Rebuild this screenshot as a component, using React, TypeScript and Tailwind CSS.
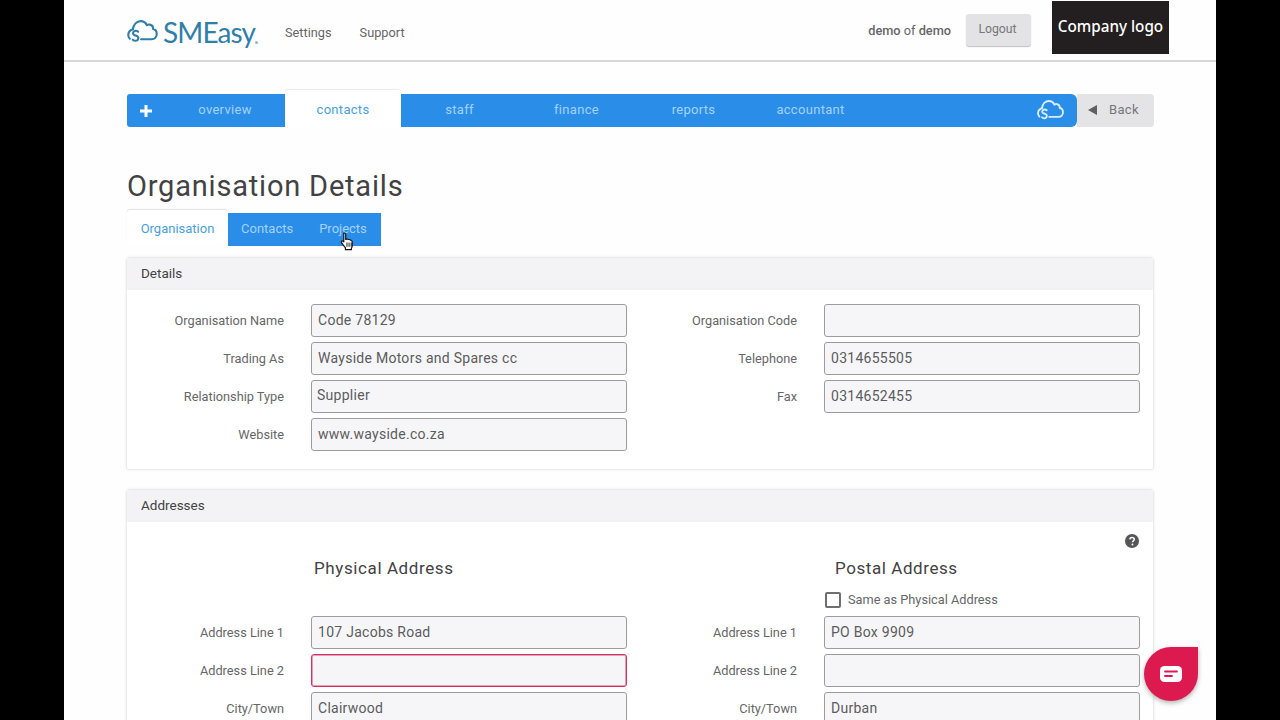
const font = { fontFamily: "Roboto, 'Liberation Sans', sans-serif" };

function CloudLogo({ className }: { className: string }) {
  return (
    <svg className={className} viewBox="0 0 32 26" fill="none" stroke="currentColor" strokeWidth={2.2} strokeLinecap="round" strokeLinejoin="round" aria-hidden="true">
      <path d="M6 9.500C3 10.500 1.200 12.600 1.200 15.600c0 1.600.6 2.900 1.600 3.900" />
      <path d="M6 9.500C6.600 4.600 10 1.200 14 1.200c3 0 5.400 1.700 6.600 4.200 1-.6 2-.8 3-.6 2.200.4 3.500 2.300 3.400 4.600 2.500.4 3.800 2.700 3.800 5.200 0 3.100-2.300 5.400-5.200 5.400H14.500" />
      <path d="M11.500 12.200C10.300 11.200 8.200 11 7 12c-1.300 1.100-1 3 .4 3.600l2.800 1.100c1.600.7 2 2.800.7 4-1.200 1.200-3.600 1.100-5-.2" />
    </svg>
  );
}

function Field({ label, value, error, select }: { label: string; value?: string; error?: boolean; select?: boolean }) {
  return (
    <div className="flex items-center h-[33px]">
      <label className="w-[157px] shrink-0 text-right text-[12.75px] text-[#666668]">{label}</label>
      <div
        className={`ml-[27px] w-[316px] h-[33px] shrink-0 rounded-[3px] bg-[#f6f6f8] border flex items-center text-[14px] tracking-[0.27px] text-[#5c5c5e] ${
          select ? "px-[5px] pb-[2px]" : "px-[6px]"
        } ${error ? "border-[#d5305e] shadow-[inset_0_0_0_1px_#e4a0b4]" : "border-[#9c9c9c]"}`}
      >
        {value}
      </div>
    </div>
  );
}

function Card({ title, children, className }: { title: string; children: React.ReactNode; className?: string }) {
  return (
    <section className={`rounded-[2px] bg-white shadow-[0_0_3px_rgba(0,0,0,0.22)] ${className ?? ""}`}>
      <div className="h-[32px] pb-[1px] bg-[#f3f3f5] pl-[14px] flex items-center text-[13.5px] text-[#424244]">{title}</div>
      {children}
    </section>
  );
}

const navItems = ["staff", "finance", "reports", "accountant"];

export default function App() {
  return (
    <div className="h-[720px] overflow-hidden bg-black flex justify-center" style={font}>
      <div className="relative w-[1152px] h-[720px] overflow-hidden bg-[#fefefe]">
        {/* top bar */}
        <header className="h-[62px] border-b-2 border-[#d8d8d8] pl-[63px] flex items-start">
          <div className="flex items-center h-[64px] text-[#2f7fa8]">
            <CloudLogo className="w-[31px] h-[25px]" />
            <span className="ml-[5px] text-[28px] tracking-[-0.9px]" style={{ fontFamily: "Lato, sans-serif" }}>SMEasy</span>
            <span className="self-end mb-[20px] w-[3px] h-[3px] rounded-full bg-[#8fb8cf]" />
          </div>
          <nav className="flex items-center h-[65px] ml-[27px] gap-[28px] text-[12.75px] text-[#666668]">
            <a>Settings</a>
            <a>Support</a>
          </nav>
          <div className="ml-auto flex items-start pr-[47px]">
            <div className="mt-[21px] text-[12.75px] text-[#666668]">
              <b className="font-medium">demo</b> of <b className="font-medium">demo</b>
            </div>
            <button className="mt-[14px] ml-[15px] w-[65px] h-[32px] pb-[1px] pr-[2px] rounded-[3px] bg-[#e3e3e5] text-[12.25px] text-[#77777a] shadow-[0_1px_1px_rgba(0,0,0,0.25)]">Logout</button>
            <div className="mt-[1px] ml-[21px] w-[117px] h-[53px] bg-[#231f20] text-white text-[15.25px] font-medium flex items-center justify-center pb-[2px]" style={{ fontFamily: "'Noto Sans', sans-serif" }}>Company logo</div>
          </div>
        </header>

        <main className="pl-[63px] pr-[63px]">
          {/* main nav */}
          <div className="mt-[32px] flex items-end h-[33px] text-[13px]">
            <div className="w-[950px] h-[33px] shrink-0 rounded-l-[3px] rounded-r-[6px] bg-[#2a8de8] flex items-center">
              <div className="w-[38px] flex justify-center text-white">
                <svg className="w-[12px] h-[12px]" viewBox="0 0 12 12" fill="currentColor" aria-hidden="true"><path d="M4.500 0h3v4.500H12v3H7.500V12h-3V7.500H0v-3h4.500z" /></svg>
              </div>
              <a className="w-[120px] text-center text-[#a4d2f7] tracking-[0.3px] pb-[2px]">overview</a>
              <div className="relative w-[116px] h-[37px] -mt-[4px] pt-[3px] rounded-t-[3px] bg-white flex items-center justify-center text-[#4a9fda] tracking-[0.3px] shadow-[0_-1px_1px_rgba(0,0,0,0.08)]">contacts</div>
              {navItems.map((n) => (
                <a key={n} className="w-[117px] text-center text-[#a4d2f7] tracking-[0.3px] pb-[2px]">{n}</a>
              ))}
              <CloudLogo className="ml-auto mr-[13px] w-[27px] h-[22px] text-[#d8eefc]" />
            </div>
            <button className="w-[77px] h-[33px] shrink-0 rounded-r-[4px] bg-[#e4e4e6] flex items-center text-[#77777a] tracking-[0.3px] pb-[1px]">
              <span className="ml-[11px] w-0 h-0 border-y-[5px] border-y-transparent border-r-[9px] border-r-[#5f5f61]" />
              <span className="ml-[12px]">Back</span>
            </button>
          </div>

          <h1 className="mt-[41px] text-[29px] leading-[36px] tracking-[0.8px] text-[#424244]">Organisation Details</h1>

          {/* sub tabs */}
          <div className="mt-[6px] flex items-end h-[36px] text-[13px]">
            <div className="w-[101px] h-[36px] pt-[2px] rounded-t-[3px] bg-white flex items-center justify-center text-[#4a9fda] shadow-[0_-1px_1px_rgba(0,0,0,0.12)]">Organisation</div>
            <div className="w-[153px] h-[33px] bg-[#2a8de8] flex items-center text-[#a4d2f7] pb-[2px]">
              <a className="ml-[13px]">Contacts</a>
              <a className="ml-[26px]">Projects</a>
            </div>
          </div>

          <Card title="Details" className="mt-[12px] h-[211px]">
            <div className="pt-[14px] grid grid-cols-[500px_1fr] gap-x-[13px]">
              <div className="flex flex-col gap-[5px]">
                <Field label="Organisation Name" value="Code 78129" />
                <Field label="Trading As" value="Wayside Motors and Spares cc" />
                <Field label="Relationship Type" value="Supplier" select />
                <Field label="Website" value="www.wayside.co.za" />
              </div>
              <div className="flex flex-col gap-[5px]">
                <Field label="Organisation Code" />
                <Field label="Telephone" value="0314655505" />
                <Field label="Fax" value="0314652455" />
              </div>
            </div>
          </Card>

          <Card title="Addresses" className="relative mt-[21px] h-[300px]">
            <svg className="absolute right-[14px] top-[44px] w-[14px] h-[14px] text-[#555557]" viewBox="0 0 16 16" aria-hidden="true">
              <circle cx="8" cy="8" r="8" fill="currentColor" />
              <path d="M5.500 6.200C5.600 4.800 6.700 4 8 4c1.400 0 2.600.8 2.600 2.200 0 1.700-2.100 1.800-2.100 3.300" fill="none" stroke="#fff" strokeWidth={1.7} />
              <circle cx="8.500" cy="12" r="1.100" fill="#fff" />
            </svg>
            <div className="pt-[34px] grid grid-cols-[500px_1fr] gap-x-[13px]">
              <div>
                <h2 className="ml-[187px] text-[17px] leading-[24px] tracking-[0.6px] text-[#424244]">Physical Address</h2>
                <div className="h-[36px]" />
                <div className="flex flex-col gap-[5px]">
                  <Field label="Address Line 1" value="107 Jacobs Road" />
                  <Field label="Address Line 2" error />
                  <Field label="City/Town" value="Clairwood" />
                </div>
              </div>
              <div>
                <h2 className="ml-[195px] text-[17px] leading-[24px] tracking-[0.57px] text-[#424244]">Postal Address</h2>
                <div className="h-[36px] ml-[185px] flex items-center pt-[3px] text-[12.75px] text-[#666668]">
                  <span className="w-[16px] h-[16px] rounded-[2px] border-2 border-[#6f6f71] bg-white" />
                  <span className="ml-[7px]">Same as Physical Address</span>
                </div>
                <div className="flex flex-col gap-[5px]">
                  <Field label="Address Line 1" value="PO Box 9909" />
                  <Field label="Address Line 2" />
                  <Field label="City/Town" value="Durban" />
                </div>
              </div>
            </div>
          </Card>
        </main>

        {/* chat launcher */}
        <div className="absolute left-[1080px] top-[647px] w-[54px] h-[54px] rounded-full rounded-tr-[6px] bg-[#dc1a50] shadow-[0_2px_5px_rgba(0,0,0,0.3)] flex items-center justify-center">
          <svg className="w-[22px] h-[16px]" viewBox="0 0 22 16" aria-hidden="true">
            <rect width="22" height="16" rx="4.500" fill="#fff" />
            <path d="M5 5.500h12M5 10h7" stroke="#dc1a50" strokeWidth={1.8} strokeLinecap="round" />
          </svg>
        </div>

        {/* mouse cursor */}
        <svg className="absolute left-[276px] top-[232px] w-[15px] h-[19px]" viewBox="0 0 14 18" aria-hidden="true">
          <path d="M3.500 1.200c.8-.6 1.800 0 1.800 1V7l1-.3 1 .2 1 .2 1 .3 1 .4c.8.4 1.200 1 1.200 1.900v3.500c0 .8-.3 1.500-.8 2.100v1.400H5v-1.600L1.300 10c-.7-.9.500-2 1.400-1.300l.8.700z" fill="#fff" stroke="#111" strokeWidth={1.1} strokeLinejoin="round" />
          <path d="M6.500 10v4M8.500 10v4M10.500 10v4" stroke="#111" strokeWidth={0.9} />
        </svg>
      </div>
    </div>
  );
}
